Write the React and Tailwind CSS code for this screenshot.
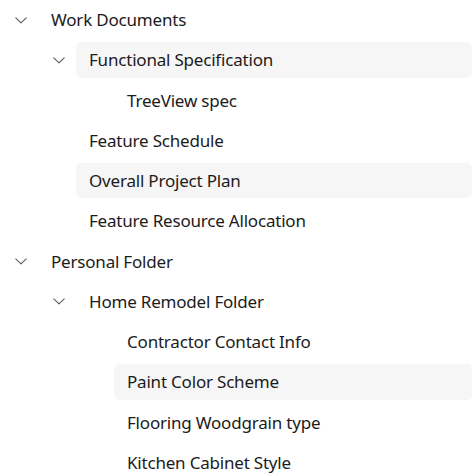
import React from "react";

const items = [
  { label: "Work Documents", level: 0, chevron: true },
  { label: "Functional Specification", level: 1, chevron: true, hl: true },
  { label: "TreeView spec", level: 2 },
  { label: "Feature Schedule", level: 1 },
  { label: "Overall Project Plan", level: 1, hl: true },
  { label: "Feature Resource Allocation", level: 1 },
  { label: "Personal Folder", level: 0, chevron: true },
  { label: "Home Remodel Folder", level: 1, chevron: true },
  { label: "Contractor Contact Info", level: 2 },
  { label: "Paint Color Scheme", level: 2, hl: true },
  { label: "Flooring Woodgrain type", level: 2 },
  { label: "Kitchen Cabinet Style", level: 2 },
];

const indent = ["w-0", "w-[38px]", "w-[76px]"];

function Chevron() {
  return (
    <svg width="12" height="7" viewBox="0 0 12 7" fill="none">
      <polyline points="0.8,0.8 6,5.8 11.2,0.8" stroke="#5c5c5c" strokeWidth="1.1" strokeLinejoin="round" strokeLinecap="round" />
    </svg>
  );
}

export default function App() {
  return (
    <div className="w-[474px] h-[476px] overflow-hidden bg-white text-[#1b1b1b]" style={{ fontFamily: '"Noto Sans", "Open Sans", sans-serif' }}>
      {items.map((it, i) => (
        <div key={i} className="flex h-[40.25px] pt-[2px] pb-[3px] pr-[2px]">
          <div className={`${indent[it.level]} shrink-0`} />
          <div className="w-[38px] shrink-0 flex items-center pl-[15px] pt-[1px]">
            {it.chevron && <Chevron />}
          </div>
          <div className={`flex-1 flex items-center pl-[13px] rounded-[5px] ${it.hl ? "bg-[#f6f6f6]" : ""}`}>
            <span className="text-[17px] leading-none tracking-[-0.2px] whitespace-nowrap">{it.label}</span>
          </div>
        </div>
      ))}
    </div>
  );
}
